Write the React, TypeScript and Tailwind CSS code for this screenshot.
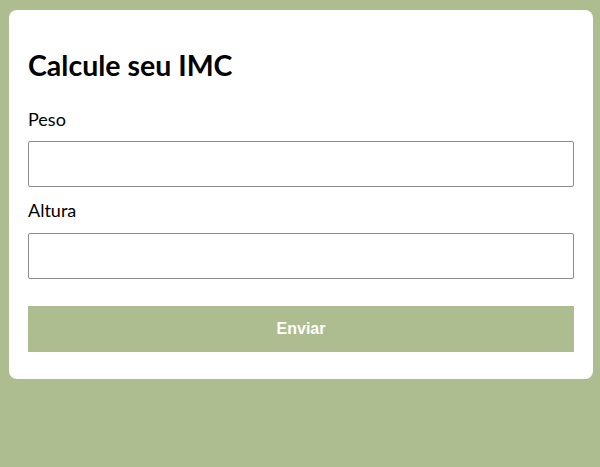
export default function App() {
  return (
    <div className="min-h-[467px] bg-[#aebd90] pl-[9px] pt-[10px]">
      <form
        className="flex w-[584px] flex-col rounded-lg bg-white px-[19px] pb-[27px] pt-[20px]"
        style={{ fontFamily: '"Lato", "Open Sans", sans-serif' }}
        onSubmit={(e) => e.preventDefault()}
      >
        <h1 className="mt-[18px] text-[28.5px] font-bold leading-[34px] text-black">Calcule seu IMC</h1>
        <label htmlFor="peso" className="mt-[24px] text-[18px] leading-[27px] text-black">
          Peso
        </label>
        <input
          id="peso"
          type="text"
          className="mt-[8px] h-[46px] w-full rounded-[2px] border border-[#8d8d8d] bg-white px-2 outline-none"
        />
        <label htmlFor="altura" className="mt-[10px] text-[18px] leading-[27px] text-black">
          Altura
        </label>
        <input
          id="altura"
          type="text"
          className="mt-[9px] h-[46px] w-full rounded-[2px] border border-[#8d8d8d] bg-white px-2 outline-none"
        />
        <button
          type="submit"
          className="mt-[27px] h-[46px] w-full bg-[#aebd90] text-[16px] font-bold text-white"
          style={{ fontFamily: '"Liberation Sans", Arial, sans-serif' }}
        >
          Enviar
        </button>
      </form>
    </div>
  )
}
